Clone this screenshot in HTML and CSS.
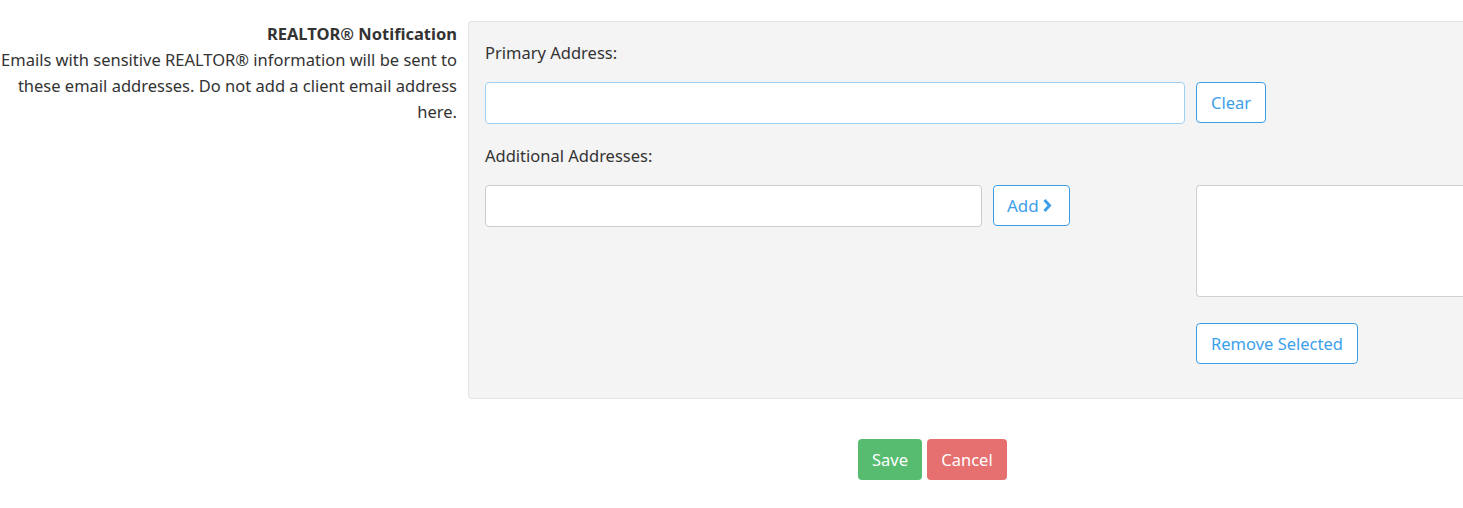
FILE: index.html
```html
<!DOCTYPE html>
<html>
<head>
<meta charset="utf-8">
<link rel="stylesheet" href="styles.css">
</head>
<body>
<div class="page">
  <div class="row">
    <div class="desc">
      <div class="title">REALTOR® Notification</div>
      <div class="text">Emails with sensitive REALTOR® information will be sent to these email addresses. Do not add a client email address here.</div>
    </div>
    <div class="panel">
      <div class="label">Primary Address:</div>
      <div class="line">
        <input class="input primary" type="text">
        <button class="btn-outline">Clear</button>
      </div>
      <div class="label label2">Additional Addresses:</div>
      <div class="line">
        <div class="addgroup">
          <input class="input additional" type="text">
          <button class="btn-outline add">Add <svg class="chev" width="10" height="15" viewBox="0 0 10 15"><path d="M2.5 2 L7.5 7.5 L2.5 13" fill="none" stroke="currentColor" stroke-width="3"/></svg></button>
        </div>
        <div class="listcol">
          <div class="list"></div>
          <button class="btn-outline remove">Remove Selected</button>
        </div>
      </div>
    </div>
  </div>
  <div class="actions">
    <button class="btn save">Save</button>
    <button class="btn cancel">Cancel</button>
  </div>
</div>
</body>
</html>
```
FILE: styles.css
```css
html, body {
  margin: 0;
  padding: 0;
  background: #fff;
}
body {
  font-family: "Noto Sans", "Open Sans", sans-serif;
  font-size: 16.5px;
  line-height: 26px;
  color: #333;
}
.page {
  padding-top: 21px;
}
.row {
  display: grid;
  grid-template-columns: 457px 1fr;
  column-gap: 11px;
}
.desc {
  text-align: right;
}
.title {
  font-weight: bold;
}
.panel {
  background: #f4f4f4;
  border: 1px solid #e4e4e4;
  border-right: none;
  border-radius: 4px 0 0 4px;
  padding: 18px 0 34px 16px;
  height: 378px;
  box-sizing: border-box;
}
.label {
  height: 26px;
  margin-bottom: 16px;
}
.label2 {
  margin-top: 19px;
}
.line {
  display: flex;
  align-items: flex-start;
  gap: 11px;
}
.input {
  height: 42px;
  box-sizing: border-box;
  border: 1px solid #cccccc;
  border-radius: 4px;
  background: #fff;
  padding: 6px 12px;
  font: inherit;
  outline: none;
  flex: none;
}
.input.primary {
  width: 700px;
  border-color: #9fd0f3;
}
.input.additional {
  width: 497px;
}
.addgroup {
  display: flex;
  gap: 11px;
  width: 700px;
  flex: none;
}
.btn-outline {
  height: 41px;
  box-sizing: border-box;
  border: 1px solid #3a9de6;
  border-radius: 4px;
  background: #fff;
  color: #3d9fe9;
  font: inherit;
  padding: 0 14px;
  cursor: pointer;
  display: inline-flex;
  align-items: center;
  flex: none;
}
.add {
  width: 77px;
  padding: 0 13px;
  gap: 3px;
  font-size: 17px;
}
.chev {
  display: block;
}
.listcol {
  flex: 1;
  display: flex;
  flex-direction: column;
  align-items: flex-start;
  gap: 26px;
}
.list {
  align-self: stretch;
  height: 112px;
  box-sizing: border-box;
  border: 1px solid #cccfd4;
  border-right: none;
  border-radius: 4px 0 0 4px;
  background: #fff;
}
.remove {
  width: 162px;
  justify-content: center;
}
.actions {
  display: flex;
  gap: 5px;
  margin-top: 40px;
  padding-left: 858px;
}
.btn {
  height: 41px;
  border: none;
  border-radius: 4px;
  color: #fff;
  font: inherit;
  padding: 0 13px;
}
.save {
  background: #57bb70;
  width: 64px;
}
.cancel {
  background: #e66f6f;
  width: 80px;
}
```
